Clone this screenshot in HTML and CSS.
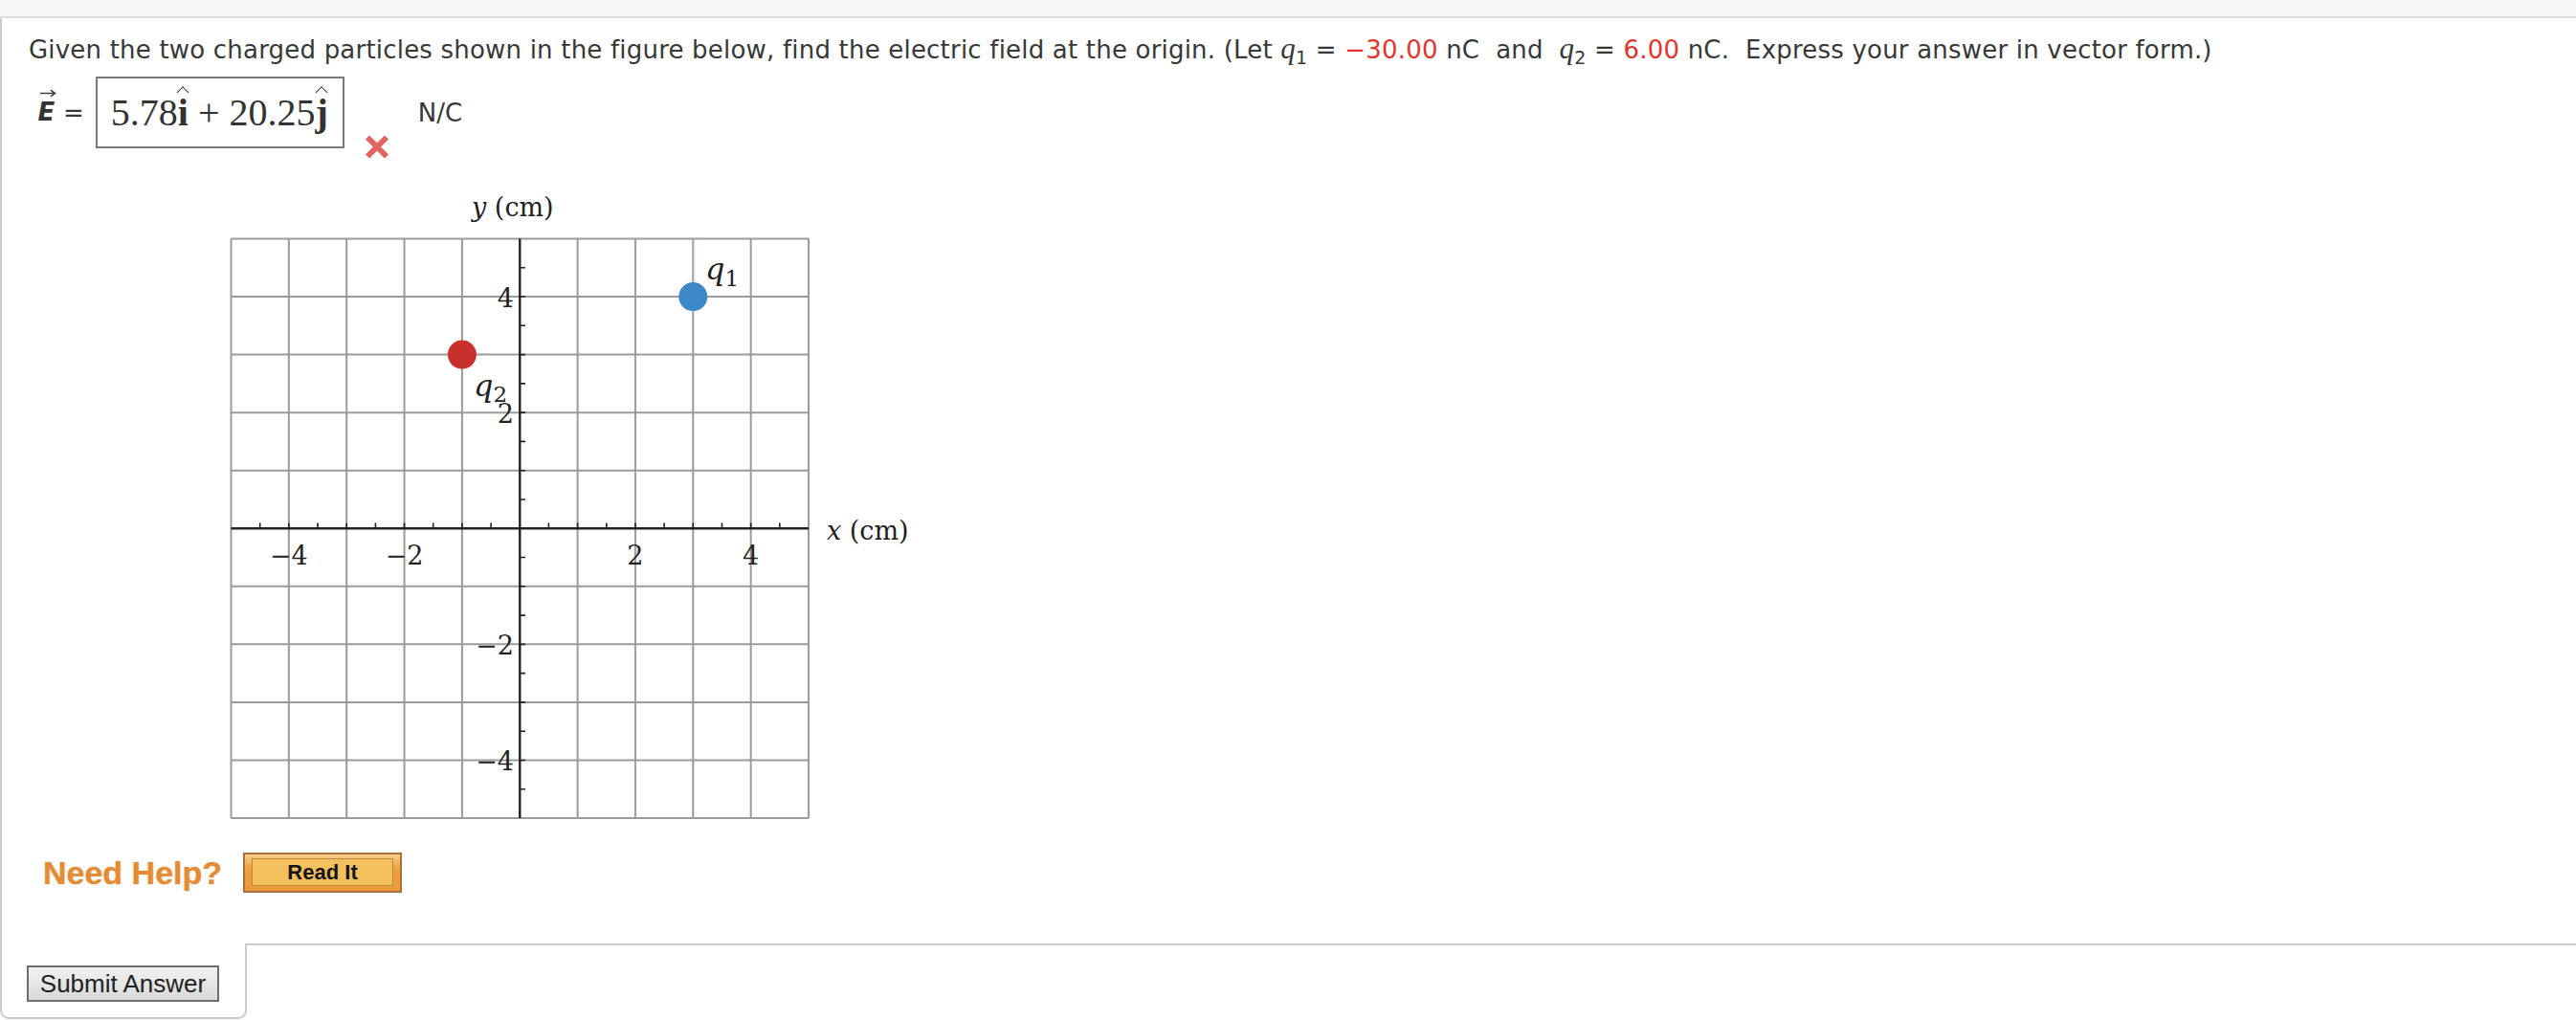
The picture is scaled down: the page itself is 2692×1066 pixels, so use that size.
FILE: index.html
```html
<!DOCTYPE html>
<html>
<head>
<meta charset="utf-8">
<link rel="stylesheet" href="styles.css">
</head>
<body>
<div class="topbar"></div>
<div class="panel">
  <p class="question">Given the two charged particles shown in the figure below, find the electric field at the origin. (Let <span class="mvar">q</span><sub class="msub">1</sub> = <span class="red">−30.00</span> nC &nbsp;and&nbsp; <span class="mvar">q</span><sub class="msub">2</sub> = <span class="red">6.00</span> nC.&nbsp; Express your answer in vector form.)</p>
  <div class="answer-row">
    <span class="evec">
      <svg class="arrow" width="18" height="9" viewBox="0 0 18 9"><path d="M1 4.5H16M12 1.2L16.5 4.5L12 7.8" fill="none" stroke="#444" stroke-width="1.6"/></svg>
      <span class="evec-letter">E</span>
    </span>
    <span class="eq">=</span>
    <div class="answer-box">5.78<span class="hat">i</span> + 20.25<span class="hat">j</span></div>
    <svg class="wrong" width="26" height="25" viewBox="0 0 26 25"><path d="M3 2.5L23 22.5M23 2.5L3 22.5" stroke="#e46462" stroke-width="6"/></svg>
    <span class="unit">N/C</span>
  </div>
  <svg class="graph" width="780" height="670" viewBox="0 0 780 670">
    <g stroke="#9b9b9b" stroke-width="2" fill="none">
      <path d="M41.5 52.5V658M101.85 52.5V658M162.2 52.5V658M222.55 52.5V658M282.9 52.5V658M403.6 52.5V658M463.95 52.5V658M524.3 52.5V658M584.65 52.5V658M645 52.5V658"/>
      <path d="M41.5 52.5H645M41.5 113.05H645M41.5 173.6H645M41.5 234.15H645M41.5 294.7H645M41.5 415.8H645M41.5 476.35H645M41.5 536.9H645M41.5 597.45H645M41.5 658H645"/>
    </g>
    <path d="M524.3 53V98" stroke="#e09a9a" stroke-width="1.2" stroke-dasharray="2 2"/>
    <g stroke="#222" fill="none">
      <path d="M343.25 52.5V658M41.5 355.25H645" stroke-width="2.4"/>
      <path stroke-width="1.6" d="M71.7 349.5V355M101.85 349.5V355M132 349.5V355M162.2 349.5V355M192.4 349.5V355M222.55 349.5V355M252.7 349.5V355M282.9 349.5V355M313.1 349.5V355M373.4 349.5V355M403.6 349.5V355M433.8 349.5V355M463.95 349.5V355M494.1 349.5V355M524.3 349.5V355M554.5 349.5V355M584.65 349.5V355M614.8 349.5V355"/>
      <path stroke-width="1.6" d="M343.5 82.8H349M343.5 113.05H349M343.5 143.3H349M343.5 173.6H349M343.5 203.9H349M343.5 234.15H349M343.5 264.4H349M343.5 294.7H349M343.5 325H349M343.5 385.5H349M343.5 415.8H349M343.5 446.1H349M343.5 476.35H349M343.5 506.6H349M343.5 536.9H349M343.5 567.2H349M343.5 597.45H349M343.5 627.7H349"/>
    </g>
    <circle cx="524.3" cy="113.05" r="15" fill="#3d88c6"/>
    <circle cx="282.9" cy="173.6" r="15" fill="#c9302c"/>
    <g class="lbl">
      <text x="101.85" y="393" text-anchor="middle">−4</text>
      <text x="222.55" y="393" text-anchor="middle">−2</text>
      <text x="463.95" y="393" text-anchor="middle">2</text>
      <text x="584.65" y="393" text-anchor="middle">4</text>
      <text x="337" y="124" text-anchor="end">4</text>
      <text x="337" y="245" text-anchor="end">2</text>
      <text x="337" y="487" text-anchor="end">−2</text>
      <text x="337" y="608" text-anchor="end">−4</text>
      <text x="293" y="29"><tspan class="it">y</tspan> (cm)</text>
      <text x="664" y="367"><tspan class="it">x</tspan> (cm)</text>
      <text x="537" y="95" class="qlbl"><tspan class="it">q</tspan><tspan class="sub" dy="7">1</tspan></text>
      <text x="295" y="217" class="qlbl"><tspan class="it">q</tspan><tspan class="sub" dy="6">2</tspan></text>
    </g>
  </svg>
  <div class="help-row">
    <span class="need-help">Need Help?</span>
    <button class="read-it"><span class="read-it-inner">Read It</span></button>
  </div>
</div>
<div class="footer">
  <div class="tab">
    <button class="submit">Submit Answer</button>
  </div>
  <div class="rest"></div>
</div>
</body>
</html>
```
FILE: styles.css
```css
html, body {
  margin: 0;
  padding: 0;
  background: #fff;
}
body {
  font-family: "DejaVu Sans", Verdana, sans-serif;
  color: #383838;
}
.topbar {
  height: 17px;
  background: #f6f6f6;
  border-bottom: 2px solid #dedede;
}
.panel {
  border-left: 2px solid #cacaca;
  padding: 16px 0 53px 28px;
}
.question {
  margin: 0;
  font-size: 26px;
  line-height: 31px;
  letter-spacing: 0.2px;
  white-space: nowrap;
}
.mvar {
  font-family: "Liberation Serif", serif;
  font-style: italic;
  font-size: 31px;
}
.msub {
  font-size: 19px;
  line-height: 0;
  vertical-align: -6px;
}
.red {
  color: #e3342f;
}
.answer-row {
  display: flex;
  align-items: flex-start;
  height: 75px;
  margin-top: 12px;
}
.evec {
  display: flex;
  flex-direction: column;
  align-items: center;
  margin: 13px 0 0 8px;
}
.arrow {
  display: block;
  margin-left: 3px;
}
.evec-letter {
  font-weight: bold;
  font-style: italic;
  font-size: 26px;
  line-height: 31px;
  margin-top: -0.5px;
  color: #333;
}
.eq {
  font-size: 26px;
  line-height: 31px;
  margin: 22.5px 0 0 7px;
}
.answer-box {
  box-sizing: border-box;
  width: 260px;
  height: 75px;
  margin-left: 12px;
  border: 2px solid #7b7b7b;
  padding: 14px 0 0 14px;
  font-family: "Liberation Serif", serif;
  font-size: 40px;
  line-height: 44px;
  color: #333;
  white-space: nowrap;
}
.hat {
  position: relative;
  font-weight: bold;
}
.hat::before {
  content: "";
  position: absolute;
  left: 50%;
  top: -3px;
  width: 8px;
  height: 8px;
  border-left: 1.6px solid #333;
  border-top: 1.6px solid #333;
  transform: translateX(-50%) rotate(45deg);
}
.wrong {
  display: block;
  margin: 61px 0 0 21px;
}
.unit {
  font-size: 26px;
  line-height: 31px;
  margin: 22.5px 0 0 30px;
}
.graph {
  display: block;
  margin: 42px 0 0 170px;
}
.lbl text {
  font-family: "DejaVu Serif", serif;
  font-size: 27px;
  fill: #222;
}
.lbl .it {
  font-style: italic;
}
.lbl .qlbl {
  font-size: 32px;
}
.lbl .sub {
  font-size: 23px;
  font-style: normal;
}
.help-row {
  display: flex;
  align-items: center;
  margin: 24px 0 0 15px;
}
.need-help {
  font-family: "Liberation Sans", Arial, sans-serif;
  font-weight: bold;
  font-size: 34px;
  line-height: 42px;
  color: #e38b35;
  text-shadow: 0 0 1.5px rgba(227, 139, 53, 0.7);
}
.read-it {
  box-sizing: border-box;
  width: 166px;
  height: 42px;
  margin-left: 22px;
  padding: 4px 7px 5px 7px;
  border: 2px solid #a8723a;
  background: linear-gradient(#f8cf8c, #ee9f40 40%, #ec9a3a);
  display: flex;
}
.read-it-inner {
  flex: 1;
  display: flex;
  align-items: center;
  justify-content: center;
  border: 1px solid #b98843;
  background: #f3c05d;
  font-family: "Liberation Sans", Arial, sans-serif;
  font-weight: bold;
  font-size: 22px;
  color: #151515;
}
.footer {
  display: flex;
}
.tab {
  box-sizing: border-box;
  width: 258px;
  border: 2px solid #cacaca;
  border-top: none;
  border-radius: 0 0 9px 9px;
  padding: 23px 0 16px 26px;
}
.submit {
  display: block;
  box-sizing: border-box;
  width: 201px;
  height: 38px;
  padding: 0;
  border: 2px solid #6d6d6d;
  background: linear-gradient(#f2f2f2, #d9d9d9);
  font-family: "Liberation Sans", Arial, sans-serif;
  font-size: 26px;
  color: #222;
}
.rest {
  flex: 1;
  border-top: 2px solid #cacaca;
}
```
